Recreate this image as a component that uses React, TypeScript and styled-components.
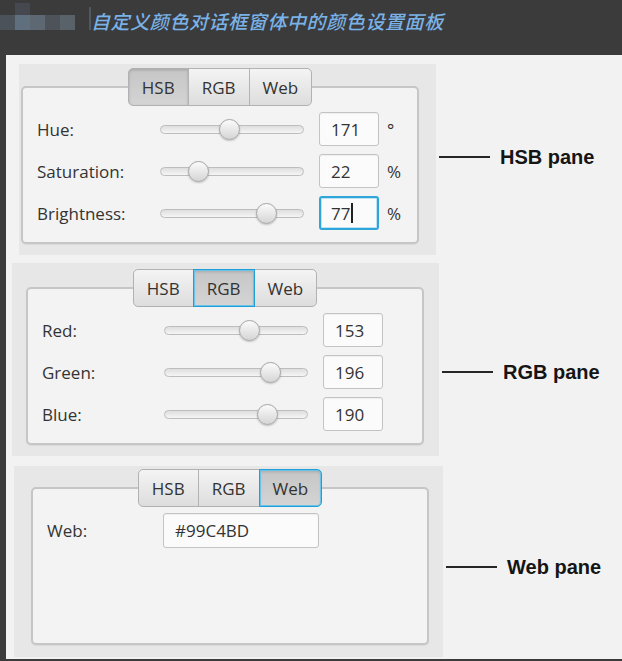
import React from "react";
import styled, { createGlobalStyle, css } from "styled-components";

const GlobalStyle = createGlobalStyle`
  html, body {
    margin: 0;
    padding: 0;
    background: #3b3b3b;
  }
  body {
    font-family: "Open Sans", "Noto Sans", sans-serif;
  }
`;

const Page = styled.div`
  width: 622px;
  height: 661px;
  background: #3b3b3b;
  display: flex;
  flex-direction: column;
  overflow: hidden;
`;

const Header = styled.div`
  height: 55px;
  flex-shrink: 0;
  display: flex;
  align-items: flex-start;
`;

const Title = styled.h1`
  margin: 10px 0 0 0;
  font: italic 500 19px/21px "Noto Sans CJK SC", "Noto Sans CJK JP", sans-serif;
  letter-spacing: 0.6px;
  color: #7ab2e8;
  white-space: nowrap;
`;

const Sheet = styled.div`
  margin-left: 6px;
  height: 604px;
  box-sizing: border-box;
  padding-top: 9px;
  background: #f2f2f2;
  display: flex;
  flex-direction: column;
`;

const PaneRow = styled.div<{ $top: number; $left: number }>`
  display: flex;
  align-items: flex-start;
  margin-top: ${(p) => p.$top}px;
  margin-left: ${(p) => p.$left}px;
`;

const GrayBox = styled.div<{ $pad: string }>`
  width: 398px;
  padding: ${(p) => p.$pad};
  background: #e7e7e7;
  display: flex;
  flex-direction: column;
`;

const TabBar = styled.div`
  position: relative;
  z-index: 1;
  align-self: center;
  display: flex;
  height: 38px;
`;

const Tab = styled.div<{ $selected?: boolean; $focused?: boolean; $first?: boolean; $last?: boolean }>`
  position: relative;
  box-sizing: border-box;
  height: 38px;
  padding: 0 13px;
  margin-left: ${(p) => (p.$first ? 0 : -1)}px;
  display: flex;
  align-items: center;
  font-size: 17px;
  color: #333;
  border: 1px solid #b2b2b2;
  border-radius: ${(p) => (p.$first ? "5px 0 0 5px" : p.$last ? "0 5px 5px 0" : "0")};
  background: linear-gradient(#f4f4f4, #dddddd);
  ${(p) =>
    p.$selected &&
    css`
      background: linear-gradient(#c6c6c6, #d4d4d4);
      box-shadow: inset 0 1px 3px rgba(0, 0, 0, 0.18);
    `}
  ${(p) =>
    p.$focused &&
    css`
      z-index: 1;
      border-color: #1f9fd6;
      box-shadow: inset 0 0 0 1px #6cc2e8, inset 0 2px 3px rgba(0, 0, 0, 0.15);
    `}
`;

const Frame = styled.div`
  margin-top: -20px;
  height: 158px;
  box-sizing: border-box;
  padding: 24px 0 0 14px;
  border: 2px solid #c6c6c6;
  border-radius: 5px;
  background: #f3f3f3;
  box-shadow: 0 1px 1px rgba(0, 0, 0, 0.06);
`;

const Rows = styled.div<{ $labelCol: number }>`
  display: grid;
  grid-template-columns: ${(p) => p.$labelCol}px 159px 68px auto;
  grid-auto-rows: 34px;
  row-gap: 8px;
  align-items: center;
`;

const Label = styled.span`
  font-size: 17px;
  color: #333;
`;

const Track = styled.div`
  position: relative;
  width: 144px;
  height: 9px;
  box-sizing: border-box;
  border: 1px solid #bdbdbd;
  border-radius: 5px;
  background: linear-gradient(#dedede, #f5f5f5);
`;

const Thumb = styled.div`
  position: absolute;
  top: 50%;
  width: 21px;
  height: 21px;
  margin: -10.5px 0 0 -10.5px;
  box-sizing: border-box;
  border-radius: 50%;
  border: 1px solid #a5a5a5;
  background: linear-gradient(#fbfbfb, #d5d5d5);
  box-shadow: 0 1px 2px rgba(0, 0, 0, 0.22);
`;

const Field = styled.div<{ $focused?: boolean; $width?: number; $height?: number }>`
  box-sizing: border-box;
  width: ${(p) => p.$width ?? 60}px;
  height: ${(p) => p.$height ?? 34}px;
  padding-left: 11px;
  display: flex;
  align-items: center;
  font-size: 17px;
  color: #333;
  background: #fbfbfb;
  border: 1px solid #c3c3c3;
  border-radius: 3px;
  box-shadow: inset 0 1px 1px rgba(0, 0, 0, 0.05);
  ${(p) =>
    p.$focused &&
    css`
      padding-left: 10px;
      border: 2px solid #2fa6da;
      box-shadow: inset 0 0 0 1px #bfe3f4;
    `}
`;

const Caret = styled.span`
  display: inline-block;
  width: 1.5px;
  height: 20px;
  margin-left: 1px;
  background: #222;
`;

const Unit = styled.span`
  font-size: 17px;
  color: #333;
`;

const WebRow = styled.div`
  display: grid;
  grid-template-columns: 116px 156px;
  align-items: center;
`;

const Note = styled.div<{ $top: number }>`
  display: flex;
  align-items: center;
  height: 24px;
  margin: ${(p) => p.$top}px 0 0 3px;
`;

const NoteLine = styled.span`
  width: 51px;
  height: 2px;
  background: #262626;
`;

const NoteText = styled.span`
  margin-left: 10px;
  font: 700 20px/24px "Liberation Sans", Arial, sans-serif;
  color: #151515;
  white-space: nowrap;
`;

type Mode = "HSB" | "RGB" | "Web";

function Tabs({ selected, focused }: { selected: Mode; focused?: boolean }) {
  const modes: Mode[] = ["HSB", "RGB", "Web"];
  return (
    <TabBar>
      {modes.map((m, i) => (
        <Tab
          key={m}
          $first={i === 0}
          $last={i === modes.length - 1}
          $selected={m === selected}
          $focused={focused && m === selected}
        >
          {m}
        </Tab>
      ))}
    </TabBar>
  );
}

function Slider({ value }: { value: number }) {
  // thumb travels across the track minus its own width
  const left = 10.5 + value * (144 - 21);
  return (
    <Track>
      <Thumb style={{ left }} />
    </Track>
  );
}

type SliderRow = { label: string; value: number; frac: number; unit?: string; focused?: boolean };

const hsbRows: SliderRow[] = [
  { label: "Hue:", value: 171, frac: 171 / 360, unit: "°" },
  { label: "Saturation:", value: 22, frac: 0.22, unit: "%" },
  { label: "Brightness:", value: 77, frac: 0.77, unit: "%", focused: true },
];

const rgbRows: SliderRow[] = [
  { label: "Red:", value: 153, frac: 153 / 255 },
  { label: "Green:", value: 196, frac: 196 / 255 },
  { label: "Blue:", value: 190, frac: 190 / 255 },
];

function SliderRows({ rows, labelCol }: { rows: SliderRow[]; labelCol: number }) {
  return (
    <Rows $labelCol={labelCol}>
      {rows.map((r) => (
        <React.Fragment key={r.label}>
          <Label>{r.label}</Label>
          <Slider value={r.frac} />
          <Field $focused={r.focused}>
            {r.value}
            {r.focused && <Caret />}
          </Field>
          <Unit>{r.unit ?? ""}</Unit>
        </React.Fragment>
      ))}
    </Rows>
  );
}

function Mosaic() {
  return (
    <svg width="91" height="32" viewBox="0 0 91 32">
      <rect x="15" y="3" width="15" height="12" fill="#45494f" />
      <rect x="0" y="15" width="15" height="15" fill="#4b525a" />
      <rect x="15" y="15" width="15" height="15" fill="#5f6f7e" />
      <rect x="30" y="15" width="15" height="15" fill="#5d6873" />
      <rect x="45" y="15" width="15" height="15" fill="#4d5359" />
      <rect x="60" y="15" width="15" height="15" fill="#596169" />
      <rect x="89" y="7" width="2" height="23" fill="#4f5963" />
    </svg>
  );
}

export default function App() {
  return (
    <Page>
      <GlobalStyle />
      <Header>
        <Mosaic />
        <Title>自定义颜色对话框窗体中的颜色设置面板</Title>
      </Header>
      <Sheet>
        <PaneRow $top={0} $left={13}>
          <GrayBox $pad="4px 17px 11px 2px">
            <Tabs selected="HSB" />
            <Frame>
              <SliderRows rows={hsbRows} labelCol={123} />
            </Frame>
          </GrayBox>
          <Note $top={81}>
            <NoteLine />
            <NoteText>HSB pane</NoteText>
          </Note>
        </PaneRow>
        <PaneRow $top={8} $left={6}>
          <GrayBox $pad="6px 15px 11px 14px">
            <Tabs selected="RGB" focused />
            <Frame>
              <SliderRows rows={rgbRows} labelCol={122} />
            </Frame>
          </GrayBox>
          <Note $top={97}>
            <NoteLine />
            <NoteText>RGB pane</NoteText>
          </Note>
        </PaneRow>
        <PaneRow $top={10} $left={8}>
          <GrayBox $pad="3px 14px 12px 17px">
            <Tabs selected="Web" focused />
            <Frame>
              <WebRow>
                <Label>Web:</Label>
                <Field $width={156} $height={35}>
                  #99C4BD
                </Field>
              </WebRow>
            </Frame>
          </GrayBox>
          <Note $top={89}>
            <NoteLine />
            <NoteText>Web pane</NoteText>
          </Note>
        </PaneRow>
      </Sheet>
    </Page>
  );
}
